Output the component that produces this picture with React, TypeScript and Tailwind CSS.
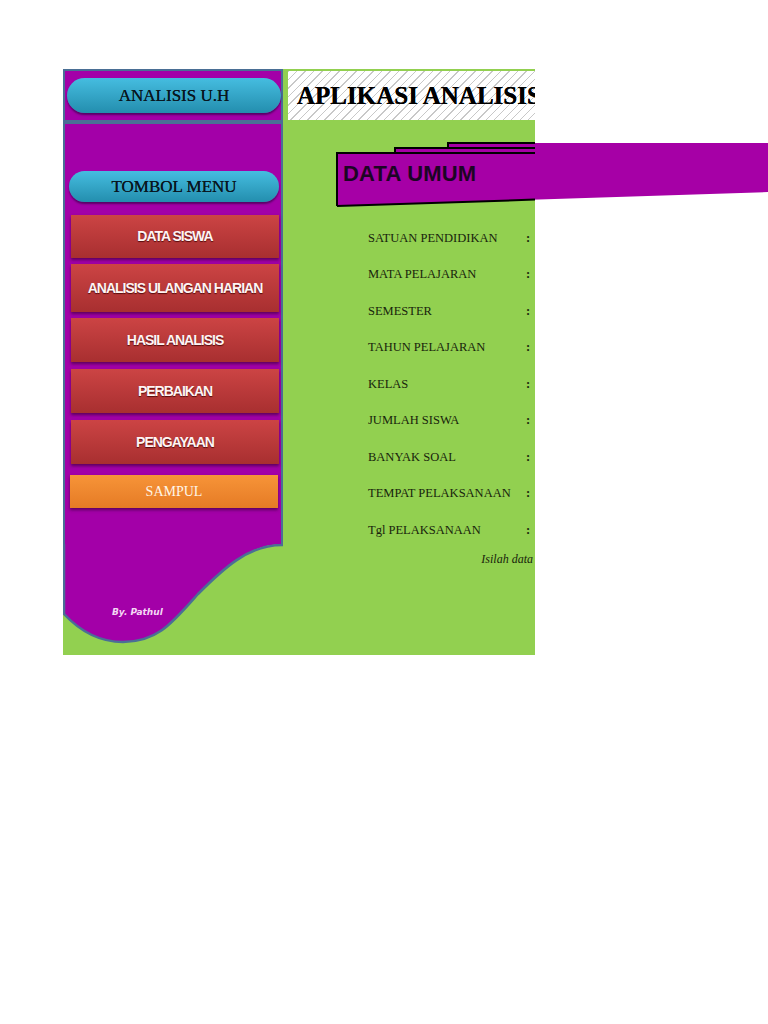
import React from "react";

const rows = [
  "SATUAN PENDIDIKAN",
  "MATA PELAJARAN",
  "SEMESTER",
  "TAHUN PELAJARAN",
  "KELAS",
  "JUMLAH SISWA",
  "BANYAK SOAL",
  "TEMPAT PELAKSANAAN",
  "Tgl PELAKSANAAN",
];

const redBtn =
  "flex items-center justify-center bg-gradient-to-b from-[#cc4444] to-[#a82f30] text-[#fff4f4] font-bold text-[14px] tracking-[-1px] shadow-[0_2px_3px_rgba(60,0,60,0.7)] [text-shadow:0_1px_1px_rgba(60,0,0,0.8)]";

function Pill({ label, cls }: { label: string; cls: string }) {
  return (
    <div
      className={
        "flex items-center justify-center rounded-full bg-gradient-to-b from-[#45bde0] to-[#238eae] text-[#08161e] text-[17px] shadow-[0_2px_2px_rgba(40,0,60,0.6)] [text-shadow:0_0_0.4px_#08161e] " +
        cls
      }
      style={{ fontFamily: '"Liberation Serif", serif' }}
    >
      {label}
    </div>
  );
}

export default function App() {
  const narrow = { fontFamily: '"Liberation Sans Narrow", "Liberation Sans", sans-serif' };
  return (
    <div className="w-[768px] h-[1024px] bg-white relative overflow-hidden">
      <div className="pt-[69px] pl-[63px]">
        <div className="w-[472px] h-[586px] bg-[#92d050] flex">
          {/* Sidebar */}
          <div className="w-[220px] shrink-0 flex flex-col">
            <div className="h-[53px] border-2 border-[#4a6f95] bg-[#a300a8] flex items-center pl-[2px]">
              <Pill label="ANALISIS U.H" cls="w-full h-[35px]" />
            </div>
            <div className="relative flex flex-col">
              <div className="h-[422px] border-x-2 border-t-2 border-[#4a6f95] bg-[#a300a8] flex flex-col pt-[47px]">
                <Pill label="TOMBOL MENU" cls="ml-[4px] mr-[2px] h-[31px]" />
                <div className="flex flex-col ml-[6px] mr-[2px] mt-[13px]" style={narrow}>
                  <div className={redBtn + " h-[43px]"}>DATA SISWA</div>
                  <div className={redBtn + " h-[48px] mt-[6px]"}>ANALISIS ULANGAN HARIAN</div>
                  <div className={redBtn + " h-[44px] mt-[6px]"}>HASIL ANALISIS</div>
                  <div className={redBtn + " h-[44px] mt-[7px]"}>PERBAIKAN</div>
                  <div className={redBtn + " h-[44px] mt-[7px]"}>PENGAYAAN</div>
                </div>
                <div
                  className="ml-[5px] mr-[3px] mt-[11px] h-[33px] flex items-center justify-center bg-gradient-to-b from-[#f79438] to-[#e57b25] text-[#fff6e8] text-[14px] shadow-[0_2px_3px_rgba(60,0,60,0.7)]"
                  style={{ fontFamily: '"Liberation Serif", serif' }}
                >
                  SAMPUL
                </div>
              </div>
              <svg width="220" height="102" viewBox="0 0 220 102" className="block">
                <path
                  d="M0 0 H220 C185 0 160 25 135 50 C110 78 95 98 60 98 C35 98 15 85 0 70 Z"
                  fill="#a300a8"
                />
                <path
                  d="M1 0 V70 C15 85 35 98 60 98 C95 98 110 78 135 50 C160 25 185 1 219 1 V0"
                  fill="none"
                  stroke="#4a6f95"
                  strokeWidth="2.5"
                />
              </svg>
              <span
                className="absolute left-[49px] top-[484px] text-[9px] italic font-bold text-[#f4d8f4]"
                style={{ fontFamily: '"DejaVu Sans", sans-serif' }}
              >
                By. Pathul
              </span>
            </div>
          </div>

          {/* Main */}
          <div className="flex-1 min-w-0 flex flex-col">
            <div
              className="ml-[5px] mt-[2px] h-[49px] overflow-hidden whitespace-nowrap flex items-center pl-[9px] bg-[image:repeating-linear-gradient(135deg,#c8c8c8_0px,#c8c8c8_1px,#ffffff_1px,#ffffff_6px)]"
            >
              <span
                className="text-[25px] font-bold text-black [text-shadow:0_0_0.5px_#000]"
                style={{ fontFamily: '"Liberation Serif", serif' }}
              >
                APLIKASI ANALISIS
              </span>
            </div>

            <div className="relative mt-[18px] h-[72px]">
              <svg
                width="485"
                height="72"
                viewBox="0 0 485 72"
                className="absolute left-0 top-0 overflow-visible"
              >
                <polygon
                  points="54,15 112,15 112,10 165,10 165,5 485,5 485,54 54,68"
                  fill="#a600a6"
                />
                <g stroke="#000" strokeWidth="2" fill="none">
                  <polyline points="54,68 54,15 252,15" />
                  <polyline points="112,15 112,10 252,10" />
                  <polyline points="165,10 165,5 252,5" />
                  <line x1="54" y1="68" x2="252" y2="61.6" />
                </g>
              </svg>
              <div
                className="relative pt-[25px] pl-[60px] text-[22px] leading-none font-bold text-[#1c0524] tracking-[0.2px] whitespace-nowrap"
                style={{ fontFamily: '"Liberation Sans", sans-serif' }}
              >
                DATA UMUM
              </div>
            </div>

            <div
              className="flex flex-col mt-[10px] pl-[85px] text-[#18240c]"
              style={{ fontFamily: '"Liberation Serif", serif' }}
            >
              {rows.map((r) => (
                <div key={r} className="h-[36.5px] flex items-center text-[12.5px] whitespace-nowrap">
                  <span className="w-[158px] shrink-0">{r}</span>
                  <span className="font-bold">:</span>
                </div>
              ))}
              <div className="h-[20px] flex items-center justify-end pr-[2px] text-[12px] italic whitespace-nowrap">
                Isilah data
              </div>
            </div>
          </div>
        </div>
      </div>
    </div>
  );
}
